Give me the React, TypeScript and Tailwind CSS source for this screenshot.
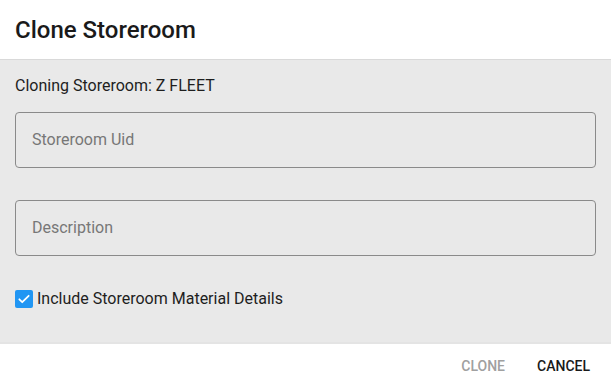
import { useState } from "react";

function OutlinedField({ label }: { label: string }) {
	return (
		<div className="flex h-[56px] items-center rounded-[4px] border border-[#8a8a8a] px-[16px]">
			<span className="text-[16px] text-[#777777]">{label}</span>
		</div>
	);
}

export default function App() {
	const [include, setInclude] = useState(true);

	return (
		<div
			className="flex h-[389px] w-[611px] flex-col bg-white"
			style={{ fontFamily: "Roboto, 'Liberation Sans', sans-serif" }}
		>
			<header className="flex h-[60px] items-center border-b border-[#d9d9d9] px-[15px]">
				<h1 className="text-[24px] font-medium text-[#1a1a1a]">
					Clone Storeroom
				</h1>
			</header>

			<main className="flex h-[282px] flex-col bg-[#e9e9e9] px-[15px] pt-[16px]">
				<p className="text-[16px] leading-[20px] text-[#1e1e1e]">
					Cloning Storeroom: Z FLEET
				</p>
				<div className="mt-[16px] flex flex-col gap-[32px]">
					<OutlinedField label="Storeroom Uid" />
					<OutlinedField label="Description" />
				</div>
				<label className="mt-[31px] flex cursor-pointer items-center gap-[4px]">
					<button
						type="button"
						onClick={() => setInclude((v) => !v)}
						className={`flex h-[18px] w-[18px] items-center justify-center rounded-[2px] ${include ? "bg-[#2196f3]" : "border-2 border-[#777777]"}`}
					>
						{include && (
							<svg width="14" height="14" viewBox="0 0 24 24" fill="none">
								<path
									d="M4 12.5l5 5L20 6.5"
									stroke="white"
									strokeWidth="3"
									strokeLinecap="round"
									strokeLinejoin="round"
								/>
							</svg>
						)}
					</button>
					<span className="text-[16px] text-[#1e1e1e]">
						Include Storeroom Material Details
					</span>
				</label>
			</main>

			<footer className="flex flex-1 items-center justify-end gap-[32px] border-t-2 border-[#e4e4e4] pr-[21px]">
				<button
					type="button"
					disabled
					className="text-[14px] font-medium text-[#a0a0a0]"
				>
					CLONE
				</button>
				<button type="button" className="text-[14px] font-medium text-[#1a1a1a]">
					CANCEL
				</button>
			</footer>
		</div>
	);
}
